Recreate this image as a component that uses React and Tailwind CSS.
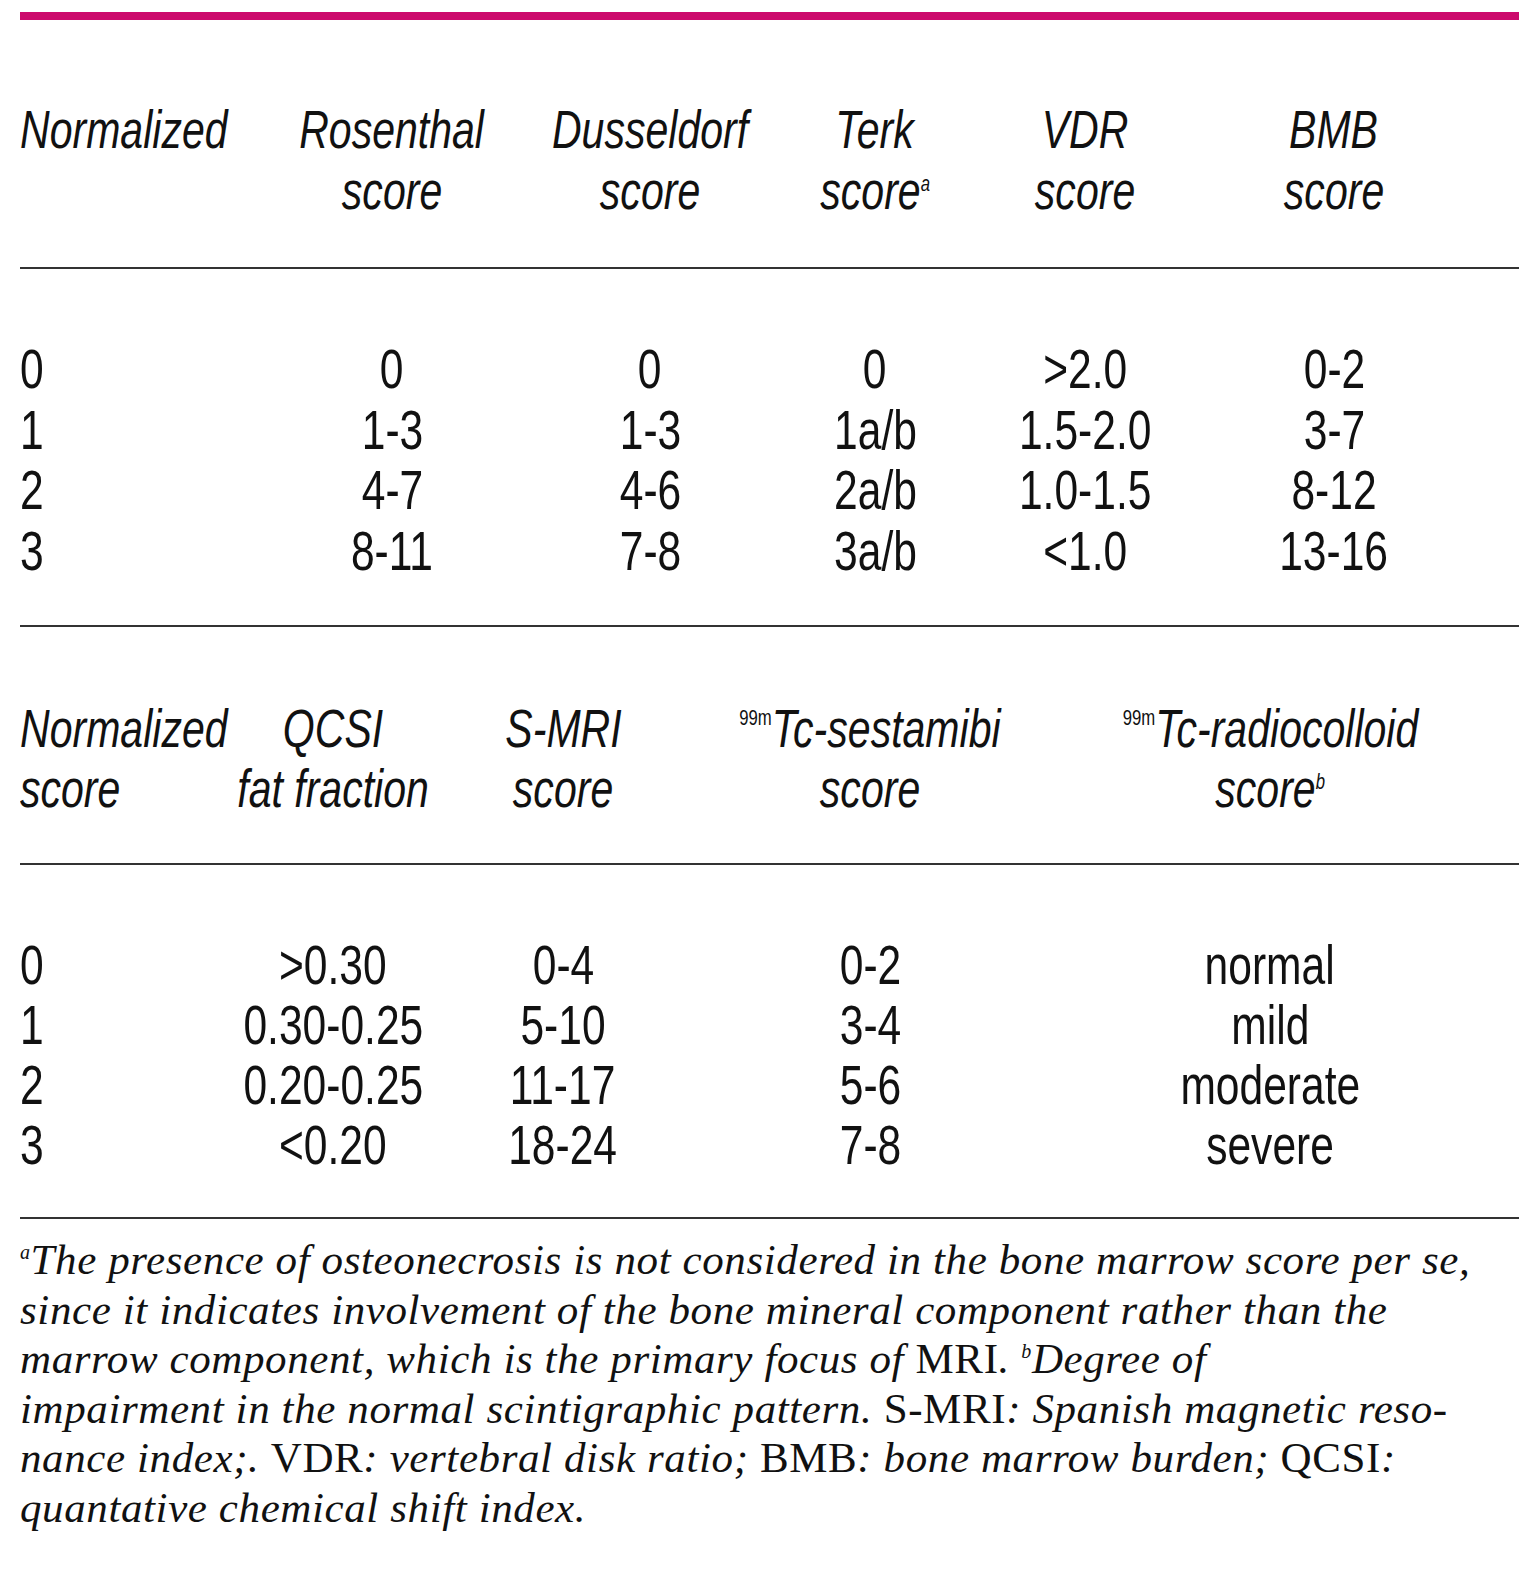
const HEAD1 = "grid grid-cols-[252px_240px_276px_174px_246px_252px]";
const HEAD2 = "grid grid-cols-[210px_206px_254px_360px_440px]";

function T({ children, left }) {
    return (
        <span className={left ? "inline-block whitespace-nowrap scale-x-[0.76] origin-left" : "inline-block whitespace-nowrap scale-x-[0.76] origin-center"}>
            {children}
        </span>
    );
}

function Sup({ children, pos }) {
    return <span className={pos === 'x' ? "relative -top-[18px] text-[22px] leading-none font-light" : "relative -top-[22px] text-[22px] leading-none not-italic font-light"}>{children}</span>;
}

function Head({ lines, left }) {
    return (
        <div className={left ? "flex flex-col items-start" : "flex flex-col items-center"}>
            {lines.map((l, i) => <T key={i} left={left}>{l}</T>)}
        </div>
    );
}

function Rule() {
    return <div className="h-[2px] bg-[#333333]"></div>;
}

const rows1 = [
    ['0', '0', '0', '0', '>2.0', '0-2'],
    ['1', '1-3', '1-3', '1a/b', '1.5-2.0', '3-7'],
    ['2', '4-7', '4-6', '2a/b', '1.0-1.5', '8-12'],
    ['3', '8-11', '7-8', '3a/b', '<1.0', '13-16'],
];

const rows2 = [
    ['0', '>0.30', '0-4', '0-2', 'normal'],
    ['1', '0.30-0.25', '5-10', '3-4', 'mild'],
    ['2', '0.20-0.25', '11-17', '5-6', 'moderate'],
    ['3', '<0.20', '18-24', '7-8', 'severe'],
];

function FnSup({ children }) {
    return <span className="relative -top-[15px] text-[20px] leading-none">{children}</span>;
}

export default function App() {
    return (
        <div className="w-[1539px] min-h-[1584px] bg-white px-[20px] pt-[12px] text-[#111111] font-['Liberation_Sans',Arial,sans-serif]">
            <div className="h-[8px] bg-[#cc0a6c]"></div>

            {/* first table */}
            <div className={HEAD1 + " mt-[79px] mb-[46px] text-[54px] leading-[61px] italic"}>
                <Head left lines={['Normalized']} />
                <Head lines={['Rosenthal', 'score']} />
                <Head lines={['Dusseldorf', 'score']} />
                <Head lines={['Terk', <>score<Sup pos="x">a</Sup></>]} />
                <Head lines={['VDR', 'score']} />
                <Head lines={['BMB', 'score']} />
            </div>
            <Rule />
            <div className="mt-[70px] mb-[44px] text-[56px] leading-[60.5px]">
                {rows1.map((r, i) => (
                    <div key={i} className={HEAD1}>
                        {r.map((c, j) => (
                            <div key={j} className={j === 0 ? "flex justify-start" : "flex justify-center"}>
                                <T left={j === 0}>{c}</T>
                            </div>
                        ))}
                    </div>
                ))}
            </div>
            <Rule />

            {/* second table */}
            <div className={HEAD2 + " mt-[71px] mb-[45px] text-[54px] leading-[60px] italic"}>
                <Head left lines={['Normalized', 'score']} />
                <Head lines={['QCSI', 'fat fraction']} />
                <Head lines={['S-MRI', 'score']} />
                <Head lines={[<><Sup>99m</Sup>Tc-sestamibi</>, 'score']} />
                <Head lines={[<><Sup>99m</Sup>Tc-radiocolloid</>, <>score<Sup pos="x">b</Sup></>]} />
            </div>
            <Rule />
            <div className="mt-[70px] mb-[42px] text-[56px] leading-[60px]">
                {rows2.map((r, i) => (
                    <div key={i} className={HEAD2}>
                        {r.map((c, j) => (
                            <div key={j} className={j === 0 ? "flex justify-start" : "flex justify-center"}>
                                <T left={j === 0}>{c}</T>
                            </div>
                        ))}
                    </div>
                ))}
            </div>
            <Rule />

            <p className="pt-[16px] font-['Liberation_Serif','Times_New_Roman',serif] italic text-[43px] tracking-[0.6px] leading-[49.5px] whitespace-nowrap text-[#111111]">
                <FnSup>a</FnSup>The presence of osteonecrosis is not considered in the bone marrow score per se,<br />
                since it indicates involvement of the bone mineral component rather than the<br />
                marrow component, which is the primary focus of <span className="not-italic">MRI</span>. <FnSup>b</FnSup>Degree of<br />
                impairment in the normal scintigraphic pattern. <span className="not-italic">S-MRI</span>: Spanish magnetic reso-<br />
                nance index;. <span className="not-italic">VDR</span>: vertebral disk ratio; <span className="not-italic">BMB</span>: bone marrow burden; <span className="not-italic">QCSI</span>:<br />
                quantative chemical shift index.
            </p>
        </div>
    );
}
